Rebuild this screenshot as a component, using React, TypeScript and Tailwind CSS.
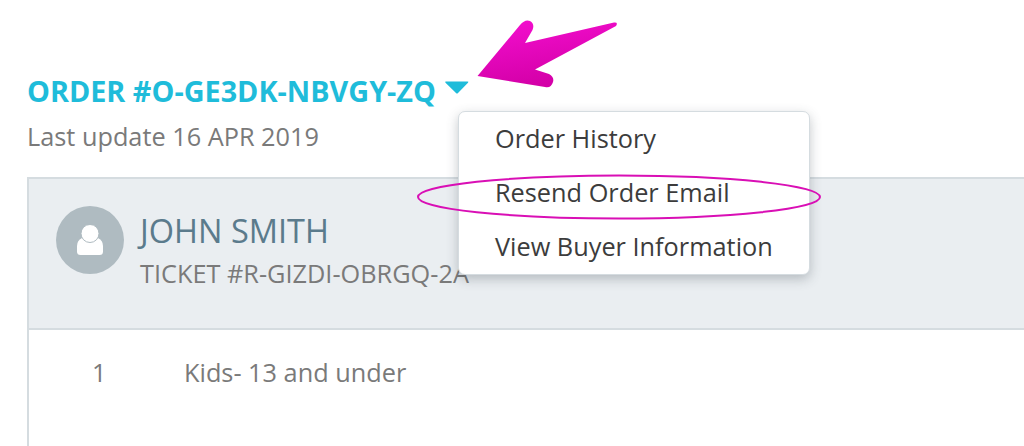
import React from 'react';

const font = "font-['Open_Sans',sans-serif]";

const menuItems = ['Order History', 'Resend Order Email', 'View Buyer Information'];

const App: React.FC = () => {
  return (
    <div className={`relative flex h-[446px] w-[1024px] flex-col overflow-hidden bg-white ${font}`}>
      <div className="pl-[27px] pt-[71px]">
        <div className="flex items-center">
          <h1 className="text-[28.8px] leading-[40px] font-bold whitespace-nowrap text-[#1fbcda]">
            ORDER #O-GE3DK-NBVGY-ZQ
          </h1>
          <svg className="ml-[8px] mt-[-7px]" width="26" height="16" viewBox="0 0 26 16">
            <path d="M2 1.5 H23.5 Q25 1.5 24 2.8 L14 13 Q13 14 12 13 L1.5 2.8 Q0.5 1.5 2 1.5 Z" fill="#1fbcda" />
          </svg>
        </div>
        <p className="mt-[7px] text-[25.3px] leading-[36px] text-[#7a7a7a]">Last update 16 APR 2019</p>
      </div>

      <section className="mt-[23px] ml-[27px] flex-1 border-l-2 border-t-2 border-[#d5dce0]">
        <div className="flex h-[151px] items-start gap-[16px] border-b-2 border-[#d5dce0] bg-[#eaeef1] pl-[27px] pt-[27px]">
          <div className="flex h-[68px] w-[68px] items-center justify-center rounded-full bg-[#afbbc1]">
            <svg width="26" height="30" viewBox="0 0 26 30">
              <path d="M5 13 H21 Q26 15.5 26 21 V26.5 Q26 30 22.5 30 H3.5 Q0 30 0 26.5 V21 Q0 15.5 5 13 Z" fill="#fff" />
              <circle cx="13" cy="8.5" r="9" fill="#fff" stroke="#afbbc1" strokeWidth="1" />
            </svg>
          </div>
          <div className="pt-[3px]">
            <div className="text-[32.5px] leading-[44px] whitespace-nowrap text-[#5b7b8c]">JOHN SMITH</div>
            <div className="mt-[5px] text-[25.3px] leading-[30px] whitespace-nowrap text-[#7a7a7a]">TICKET #R-GIZDI-OBRGQ-2A</div>
          </div>
        </div>
        <div className="flex pt-[25px] text-[25.3px] leading-[34px] text-[#7a7a7a]">
          <span className="ml-[63px] w-[92px]">1</span>
          <span>Kids- 13 and under</span>
        </div>
      </section>

      <div className="absolute left-[458px] top-[111px] flex h-[164px] w-[352px] flex-col justify-between rounded-[7px] border border-[#d5dce0] bg-white pt-[8px] pb-[10px] pl-[36px] shadow-[0_4px_12px_rgba(60,70,80,0.3)]">
        {menuItems.map((item) => (
          <div key={item} className="text-[25.3px] leading-[36px] whitespace-nowrap text-[#3c3c3c]">{item}</div>
        ))}
      </div>

      <svg className="pointer-events-none absolute left-0 top-0" width="1024" height="446" viewBox="0 0 1024 446">
        <defs>
          <linearGradient id="arrowFill" x1="0" y1="0" x2="0.3" y2="1">
            <stop offset="0" stopColor="#f50fd0" />
            <stop offset="1" stopColor="#d400a8" />
          </linearGradient>
        </defs>
        <path
          d="M477.5 76 L520 25 Q525 19 530 21 Q535 24 532.5 30 L525 43 L614 22.5 Q618.5 22 616 26 L535 69.5 L549 74 Q554.5 77 553 82 Q551 88.5 545 87 Z"
          fill="url(#arrowFill)"
        />
        <ellipse cx="619" cy="197" rx="201" ry="21.5" fill="none" stroke="#d90fb5" strokeWidth="2" />
      </svg>
    </div>
  );
};

export default App;
